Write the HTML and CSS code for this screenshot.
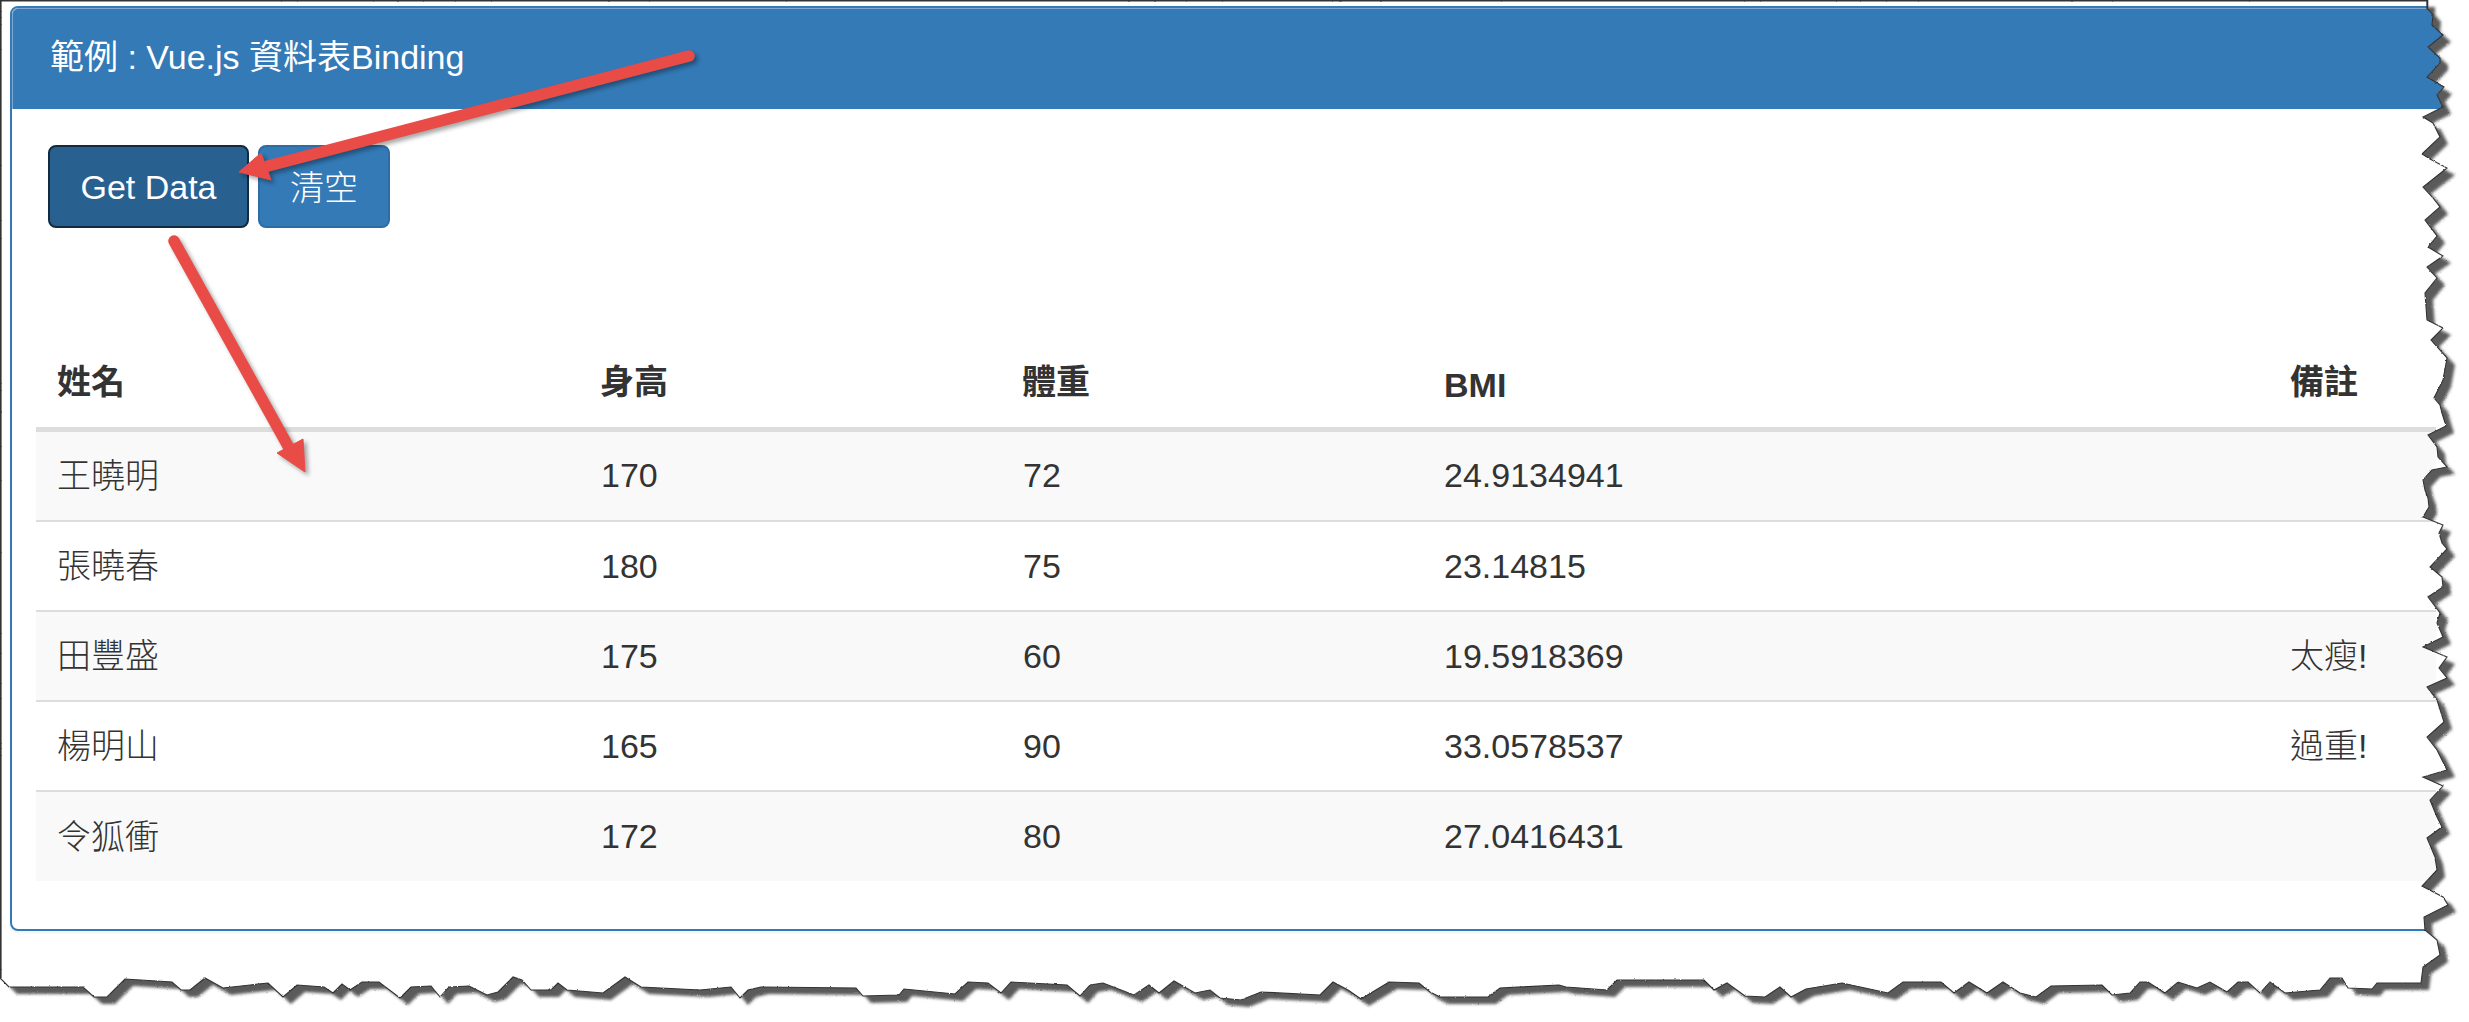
FILE: index.html
```html
<!DOCTYPE html>
<html lang="zh-Hant">
<head>
<meta charset="utf-8">
<title>範例 : Vue.js 資料表Binding</title>
<link rel="stylesheet" href="styles.css">
</head>
<body>
<div class="page">
  <section class="panel">
    <header class="panel-heading">範例 : Vue.js 資料表Binding</header>
    <div class="panel-body">
      <div class="actions">
        <button class="btn btn-active">Get Data</button>
        <button class="btn btn-cjk">清空</button>
      </div>
      <table class="data">
        <colgroup>
          <col class="c-name"><col class="c-h"><col class="c-w"><col class="c-bmi"><col class="c-note">
        </colgroup>
        <thead>
          <tr><th class="cjk">姓名</th><th class="cjk">身高</th><th class="cjk">體重</th><th class="latin">BMI</th><th class="cjk">備註</th></tr>
        </thead>
        <tbody>
          <tr><td class="cjk">王曉明</td><td>170</td><td>72</td><td>24.9134941</td><td></td></tr>
          <tr><td class="cjk">張曉春</td><td>180</td><td>75</td><td>23.14815</td><td></td></tr>
          <tr><td class="cjk">田豐盛</td><td>175</td><td>60</td><td>19.5918369</td><td class="cjk">太瘦!</td></tr>
          <tr><td class="cjk">楊明山</td><td>165</td><td>90</td><td>33.0578537</td><td class="cjk">過重!</td></tr>
          <tr><td class="cjk">令狐衝</td><td>172</td><td>80</td><td>27.0416431</td><td></td></tr>
        </tbody>
      </table>
    </div>
  </section>

  <svg class="overlay" width="2469" height="1022" viewBox="0 0 2469 1022" aria-hidden="true">
    <defs>
      <path id="paper" d="M0 0H2427V8L2433 15 2432 25 2443 35 2428 47 2440 58 2440 63 2427 77 2444 87 2437 95 2443 107 2423 117 2433 123 2440 137 2422 154 2430 159 2447 168 2423 187 2433 198 2440 207 2425 220 2437 236 2428 247 2443 256 2427 267 2437 278 2425 293 2427 320 2443 328 2431 340 2447 358 2443 380 2438 390 2434 398 2440 405 2442 413 2446 426 2428 435 2437 447 2438 457 2447 467 2432 470 2423 480 2425 490 2428 498 2429 507 2423 517 2443 525 2439 533 2442 543 2447 549 2430 567 2442 577 2443 587 2428 597 2440 613 2437 623 2443 637 2423 647 2447 657 2439 668 2447 678 2427 687 2437 700 2444 722 2427 737 2437 750 2447 770 2423 777 2443 786 2430 800 2437 817 2442 827 2427 838 2435 857 2437 870 2422 886 2443 897 2448 905 2424 917 2425 930 2437 940 2440 955 2423 967 2421 983 2400 983 2377 983 2372 989 2348 988 2342 978 2330 978 2320 990 2285 993 2270 982 2260 993 2248 982 2238 982 2227 992 2210 982 2197 988 2178 982 2165 993 2148 982 2140 982 2130 993 2112 995 2102 985 2051 986 2036 997 2020 993 2003 982 1987 993 1969 982 1954 993 1941 982 1903 982 1888 993 1842 983 1806 989 1791 997 1780 987 1765 997 1745 996 1727 983 1714 990 1704 980 1617 980 1607 990 1566 987 1559 985 1500 988 1488 997 1440 997 1430 992 1419 983 1389 982 1361 999 1348 990 1333 982 1320 995 1261 992 1241 1000 1220 998 1210 990 1195 993 1174 981 1159 993 1149 985 1134 995 1103 983 1090 985 1080 996 1067 985 1011 982 1001 993 988 983 968 982 955 994 904 989 899 995 863 996 856 988 761 987 748 990 740 998 731 987 700 990 641 987 625 977 603 993 567 990 558 983 551 990 531 990 522 980 513 977 498 992 487 995 469 986 449 987 440 997 431 986 411 987 400 998 379 982 362 982 350 990 342 984 333 993 324 987 297 985 283 997 268 983 223 988 205 978 190 990 181 990 172 982 125 979 107 997 94 997 83 987 9 987 0 978Z"/>
      <clipPath id="outside">
        <path clip-rule="evenodd" d="M-20-20H2490V1042H-20Z M0 0H2427V8L2433 15 2432 25 2443 35 2428 47 2440 58 2440 63 2427 77 2444 87 2437 95 2443 107 2423 117 2433 123 2440 137 2422 154 2430 159 2447 168 2423 187 2433 198 2440 207 2425 220 2437 236 2428 247 2443 256 2427 267 2437 278 2425 293 2427 320 2443 328 2431 340 2447 358 2443 380 2438 390 2434 398 2440 405 2442 413 2446 426 2428 435 2437 447 2438 457 2447 467 2432 470 2423 480 2425 490 2428 498 2429 507 2423 517 2443 525 2439 533 2442 543 2447 549 2430 567 2442 577 2443 587 2428 597 2440 613 2437 623 2443 637 2423 647 2447 657 2439 668 2447 678 2427 687 2437 700 2444 722 2427 737 2437 750 2447 770 2423 777 2443 786 2430 800 2437 817 2442 827 2427 838 2435 857 2437 870 2422 886 2443 897 2448 905 2424 917 2425 930 2437 940 2440 955 2423 967 2421 983 2400 983 2377 983 2372 989 2348 988 2342 978 2330 978 2320 990 2285 993 2270 982 2260 993 2248 982 2238 982 2227 992 2210 982 2197 988 2178 982 2165 993 2148 982 2140 982 2130 993 2112 995 2102 985 2051 986 2036 997 2020 993 2003 982 1987 993 1969 982 1954 993 1941 982 1903 982 1888 993 1842 983 1806 989 1791 997 1780 987 1765 997 1745 996 1727 983 1714 990 1704 980 1617 980 1607 990 1566 987 1559 985 1500 988 1488 997 1440 997 1430 992 1419 983 1389 982 1361 999 1348 990 1333 982 1320 995 1261 992 1241 1000 1220 998 1210 990 1195 993 1174 981 1159 993 1149 985 1134 995 1103 983 1090 985 1080 996 1067 985 1011 982 1001 993 988 983 968 982 955 994 904 989 899 995 863 996 856 988 761 987 748 990 740 998 731 987 700 990 641 987 625 977 603 993 567 990 558 983 551 990 531 990 522 980 513 977 498 992 487 995 469 986 449 987 440 997 431 986 411 987 400 998 379 982 362 982 350 990 342 984 333 993 324 987 297 985 283 997 268 983 223 988 205 978 190 990 181 990 172 982 125 979 107 997 94 997 83 987 9 987 0 978Z"/>
      </clipPath>
      <filter id="soft" x="-5%" y="-5%" width="110%" height="110%">
        <feGaussianBlur stdDeviation="1.4"/>
      </filter>
      <filter id="rough" filterUnits="userSpaceOnUse" x="0" y="0" width="2469" height="1022">
        <feTurbulence type="fractalNoise" baseFrequency="0.35" numOctaves="2" seed="4"/>
        <feDisplacementMap in="SourceGraphic" scale="2" xChannelSelector="R" yChannelSelector="G"/>
      </filter>
    </defs>

    <g class="torn">
      <g clip-path="url(#outside)">
        <rect class="outside" x="-20" y="-20" width="2510" height="1062"/>
        <g filter="url(#soft)"><use class="shadow" href="#paper" transform="translate(8 7)"/></g>
      </g>
      <use class="edge" href="#paper"/>
    </g>
    <path class="frame" d="M.8 978V.8H2427.5V8"/>

    <g class="arrow">
      <path class="shaft" d="M689 56 268 166"/>
      <path class="head" d="M239 172 261 153 271 180Z"/>
    </g>
    <g class="arrow">
      <path class="shaft" d="M174 241 288 446"/>
      <path class="head" d="M305 472 277 453 303 439Z"/>
    </g>
  </svg>
</div>
</body>
</html>
```
FILE: styles.css
```css
html, body {
  margin: 0;
  padding: 0;
  background: #fff;
}

.page {
  position: relative;
  width: 2469px;
  height: 1022px;
  overflow: hidden;
  padding-top: 6px;
  box-sizing: border-box;
  font-family: "Liberation Sans", "Noto Sans CJK TC", sans-serif;
  font-size: 34px;
  color: #333;
}

.panel {
  width: 2450px;
  height: 925px;
  margin-left: 10px;
  box-sizing: border-box;
  border: 2px solid #337ab7;
  border-radius: 8px;
  background: #fff;
  box-shadow: 0 2px 3px rgba(0, 0, 0, .06);
}

.panel-heading {
  height: 101px;
  box-sizing: border-box;
  padding: 0 0 9px 37px;
  display: flex;
  align-items: center;
  background: #337ab7;
  color: #fff;
  border-top: 1px solid #7fa9d0;
  border-left: 1px solid #7fa9d0;
  border-radius: 6px 6px 0 0;
}

.panel-body {
  padding: 36px 24px 0;
}

.actions {
  display: flex;
  gap: 9px;
  padding-left: 12px;
  margin-bottom: 108px;
}

.btn {
  height: 83px;
  padding: 0;
  border: 2px solid #2e6da4;
  border-radius: 8px;
  background: #337ab7;
  color: #fff;
  font: inherit;
  width: 132px;
}

.btn-active {
  width: 201px;
  padding-top: 2px;
  background: #286090;
  border-color: #122b40;
}

.btn-cjk {
  padding-bottom: 3px;
  font-weight: 300;
}

.data {
  width: 2400px;
  table-layout: fixed;
  border-collapse: collapse;
}

.c-name { width: 543px; }
.c-h { width: 422px; }
.c-w { width: 421px; }
.c-bmi { width: 847px; }

.data th, .data td {
  padding: 0 0 0 22px;
  text-align: left;
  height: 90px;
  box-sizing: border-box;
}

.data th {
  font-weight: 700;
  border-bottom: 5px solid #ddd;
  height: 93px;
}

.data th.latin {
  padding-top: 8px;
}

.data th.cjk {
  padding-left: 21px;
  padding-bottom: 4px;
}

.data td {
  border-top: 2px solid #ddd;
}

.data td.cjk {
  padding-left: 21px;
  padding-bottom: 5px;
  font-weight: 300;
}

.data tbody tr:first-child td {
  border-top: 0;
  height: 92px;
}

.data tbody tr:nth-child(odd) {
  background: #f9f9f9;
}

.overlay {
  position: absolute;
  left: 0;
  top: 0;
  display: block;
}

.outside { fill: #fff; }
.torn { filter: url(#rough); }
.shadow { fill: #5a5a5a; }
.edge { fill: none; stroke: #333; stroke-width: 1.1; }
.frame { fill: none; stroke: #333; stroke-width: 1.6; }

.arrow { filter: drop-shadow(3px 3px 2px rgba(0, 0, 0, .35)); }
.shaft { fill: none; stroke: #e94b47; stroke-width: 11.5; stroke-linecap: round; }
.head { fill: #e94b47; stroke: #e94b47; stroke-width: 1; stroke-linejoin: miter; }
```
